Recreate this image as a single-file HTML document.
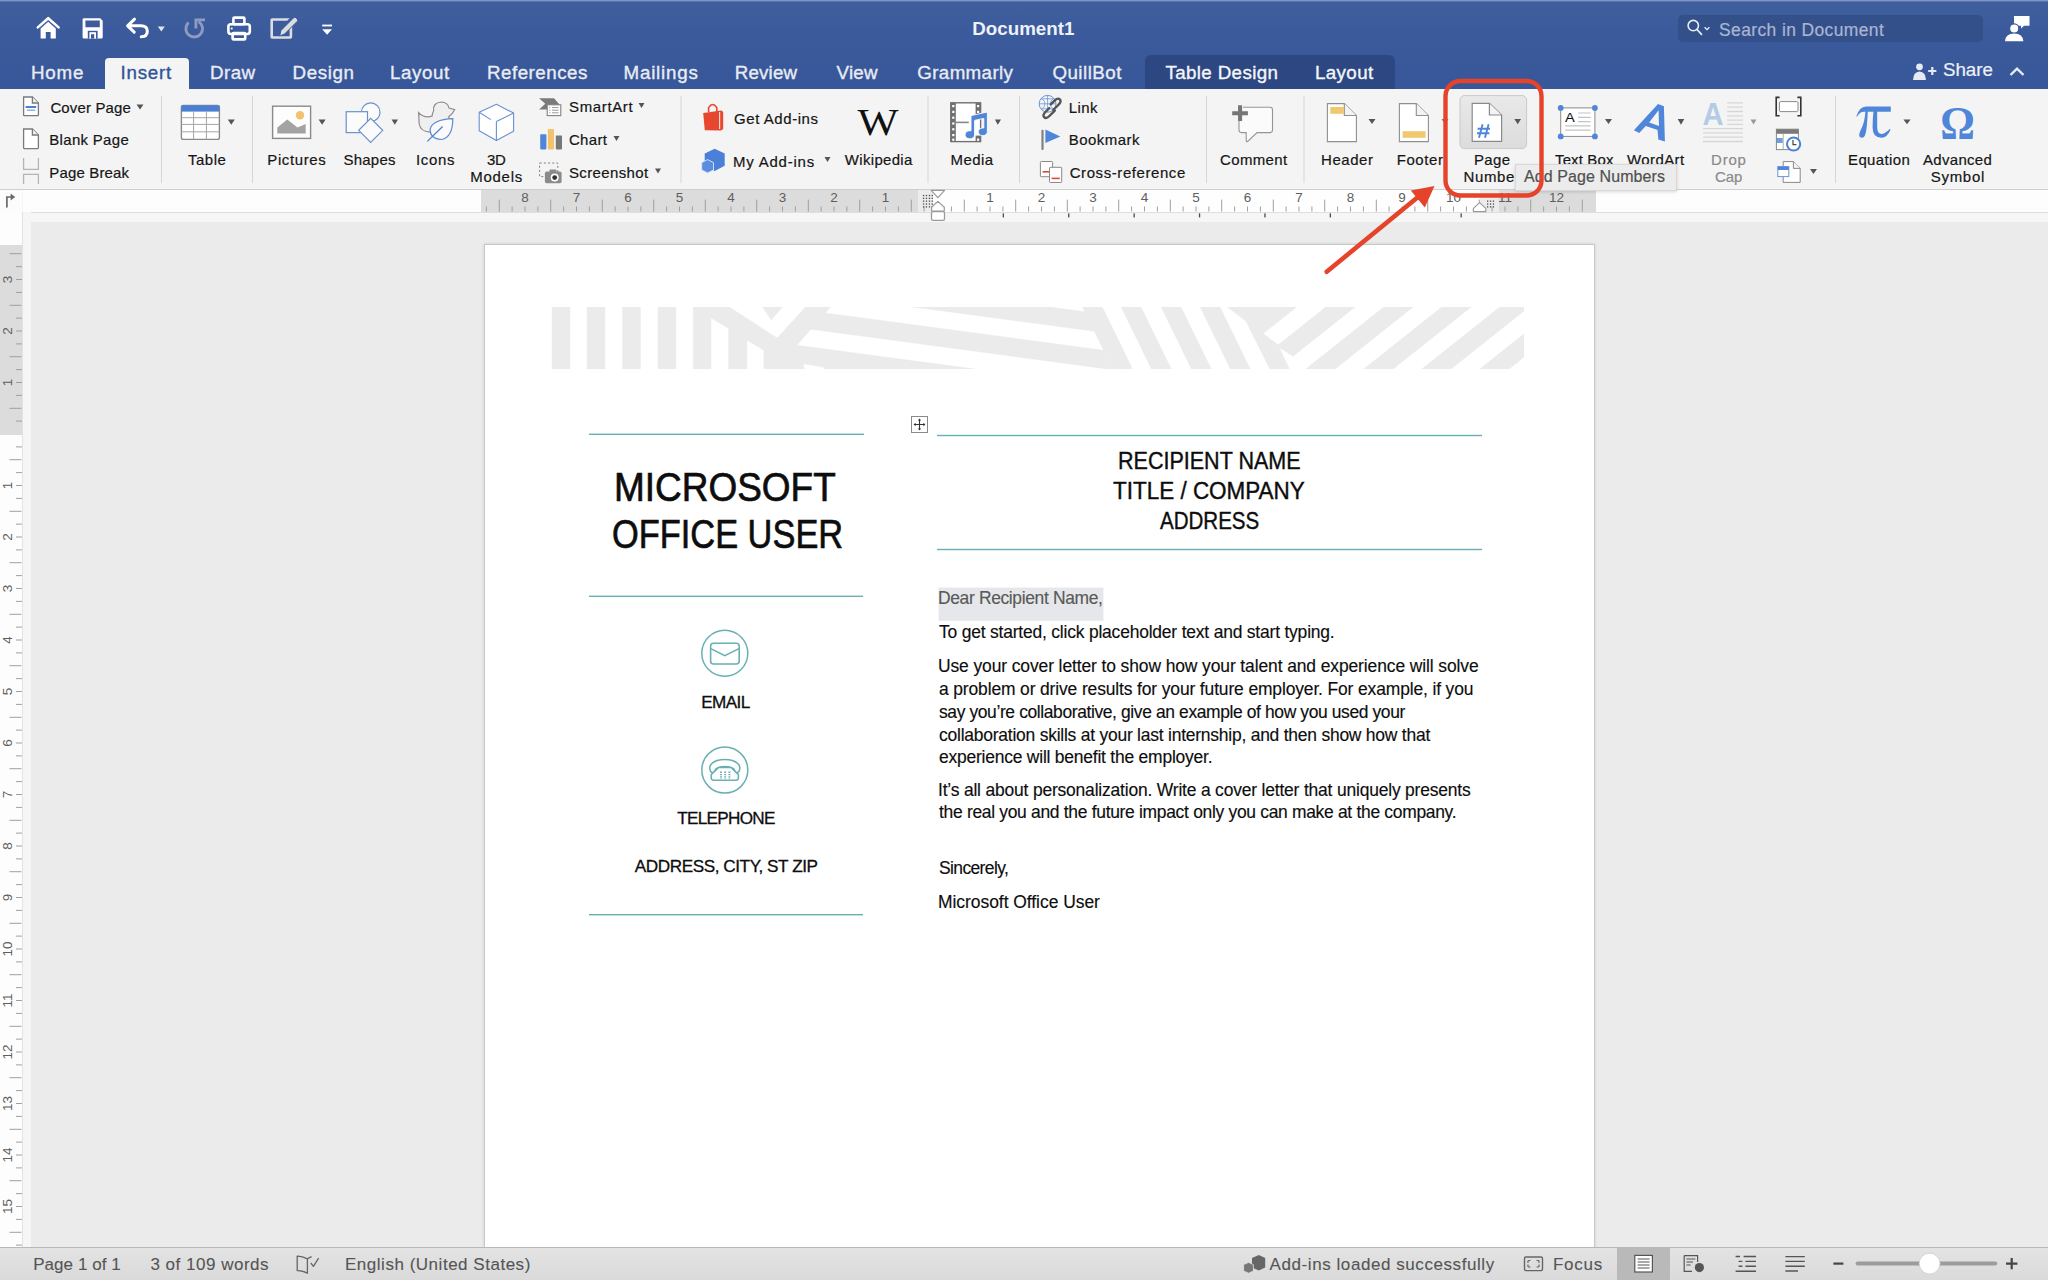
<!DOCTYPE html>
<html><head><meta charset="utf-8"><style>
html,body{margin:0;padding:0;width:2048px;height:1280px;overflow:hidden;position:relative;font-family:"Liberation Sans",sans-serif;background:#ebebeb}
.a{position:absolute}
.t{position:absolute;white-space:pre;line-height:1;font-family:"Liberation Sans",sans-serif}
</style></head><body>
<!-- title bar -->
<div class="a" style="left:0;top:0;width:2048px;height:89px;background:linear-gradient(#3f5f9f,#3a5a9b 40%,#37579a)"></div>
<div class="a" style="left:0;top:0;width:2048px;height:1px;background:#8096c2"></div><div class="a" style="left:0;top:1px;width:2048px;height:1px;background:#5673ab"></div>
<!-- search box -->
<div class="a" style="left:1678px;top:15px;width:305px;height:27px;border-radius:5px;background:#34508b"></div>
<!-- insert tab -->
<div class="a" style="left:105px;top:58px;width:84px;height:32px;border-radius:4px 4px 0 0;background:#f4f4f4"></div>
<!-- table design group -->
<div class="a" style="left:1145px;top:55px;width:250px;height:34px;border-radius:6px 6px 0 0;background:#2c4781"></div>
<!-- ribbon -->
<div class="a" style="left:0;top:89px;width:2048px;height:101px;background:#f4f4f4"></div>
<div class="a" style="left:0;top:189px;width:2048px;height:1px;background:#cfcfcf"></div>
<!-- ruler row -->
<div class="a" style="left:0;top:190px;width:2048px;height:32px;background:#f6f6f6"></div>
<div class="a" style="left:0;top:190px;width:22px;height:22px;background:#fcfcfc"></div>
<div class="a" style="left:23px;top:190px;width:2025px;height:22px;background:#fdfdfd"></div>
<div class="a" style="left:0;top:212px;width:2048px;height:1px;background:#dedede"></div>
<div class="a" style="left:481px;top:190px;width:437px;height:22px;background:#dcdcdc"></div>
<div class="a" style="left:918px;top:190px;width:15px;height:22px;background:#ececec"></div>
<div class="a" style="left:933px;top:190px;width:547px;height:22px;background:#fefefe"></div>
<div class="a" style="left:1480px;top:190px;width:19px;height:22px;background:#ececec"></div><div class="a" style="left:1499px;top:190px;width:97px;height:22px;background:#dcdcdc"></div>
<!-- vertical ruler -->
<div class="a" style="left:0;top:212px;width:22px;height:1036px;background:#fdfdfd"></div>
<div class="a" style="left:0;top:245px;width:22px;height:190px;background:#dcdcdc"></div>
<div class="a" style="left:22px;top:212px;width:1px;height:1036px;background:#e2e2e2"></div>
<div class="a" style="left:23px;top:212px;width:8px;height:1036px;background:#f6f6f6"></div>
<!-- canvas -->
<div class="a" style="left:31px;top:222px;width:2017px;height:1026px;background:#ebebeb"></div>
<!-- page -->
<div class="a" style="left:484px;top:244px;width:1111px;height:1010px;background:#ffffff;border:1px solid #c8c8c8;box-sizing:border-box;box-shadow:0 0 3px rgba(0,0,0,.12)"></div>
<!-- status bar -->
<div class="a" style="left:0;top:1247px;width:2048px;height:1px;background:#b8b8b8"></div>
<div class="a" style="left:0;top:1248px;width:2048px;height:32px;background:linear-gradient(#e3e3e3,#dadada)"></div>
<div class="a" style="left:1617px;top:1248px;width:53px;height:32px;background:#b9b9b9"></div>
<svg class="a" style="left:0;top:0" width="2048" height="1280"><rect x="923.6" y="206.5" width="1" height="5" fill="#a0a0a0"/><rect x="910.8" y="199.6" width="1" height="12" fill="#a0a0a0"/><rect x="897.9" y="206.5" width="1" height="5" fill="#a0a0a0"/><rect x="885.0" y="206.5" width="1" height="5" fill="#a0a0a0"/><rect x="872.1" y="206.5" width="1" height="5" fill="#a0a0a0"/><rect x="859.2" y="199.6" width="1" height="12" fill="#a0a0a0"/><rect x="846.4" y="206.5" width="1" height="5" fill="#a0a0a0"/><rect x="833.5" y="206.5" width="1" height="5" fill="#a0a0a0"/><rect x="820.6" y="206.5" width="1" height="5" fill="#a0a0a0"/><rect x="807.8" y="199.6" width="1" height="12" fill="#a0a0a0"/><rect x="794.9" y="206.5" width="1" height="5" fill="#a0a0a0"/><rect x="782.0" y="206.5" width="1" height="5" fill="#a0a0a0"/><rect x="769.1" y="206.5" width="1" height="5" fill="#a0a0a0"/><rect x="756.2" y="199.6" width="1" height="12" fill="#a0a0a0"/><rect x="743.4" y="206.5" width="1" height="5" fill="#a0a0a0"/><rect x="730.5" y="206.5" width="1" height="5" fill="#a0a0a0"/><rect x="717.6" y="206.5" width="1" height="5" fill="#a0a0a0"/><rect x="704.8" y="199.6" width="1" height="12" fill="#a0a0a0"/><rect x="691.9" y="206.5" width="1" height="5" fill="#a0a0a0"/><rect x="679.0" y="206.5" width="1" height="5" fill="#a0a0a0"/><rect x="666.1" y="206.5" width="1" height="5" fill="#a0a0a0"/><rect x="653.2" y="199.6" width="1" height="12" fill="#a0a0a0"/><rect x="640.4" y="206.5" width="1" height="5" fill="#a0a0a0"/><rect x="627.5" y="206.5" width="1" height="5" fill="#a0a0a0"/><rect x="614.6" y="206.5" width="1" height="5" fill="#a0a0a0"/><rect x="601.8" y="199.6" width="1" height="12" fill="#a0a0a0"/><rect x="588.9" y="206.5" width="1" height="5" fill="#a0a0a0"/><rect x="576.0" y="206.5" width="1" height="5" fill="#a0a0a0"/><rect x="563.1" y="206.5" width="1" height="5" fill="#a0a0a0"/><rect x="550.2" y="199.6" width="1" height="12" fill="#a0a0a0"/><rect x="537.4" y="206.5" width="1" height="5" fill="#a0a0a0"/><rect x="524.5" y="206.5" width="1" height="5" fill="#a0a0a0"/><rect x="511.6" y="206.5" width="1" height="5" fill="#a0a0a0"/><rect x="498.8" y="199.6" width="1" height="12" fill="#a0a0a0"/><rect x="485.9" y="206.5" width="1" height="5" fill="#a0a0a0"/><text x="885.5" y="201.8" text-anchor="middle" font-family="Liberation Sans" font-size="13.5" fill="#5e5e5e">1</text><text x="834.0" y="201.8" text-anchor="middle" font-family="Liberation Sans" font-size="13.5" fill="#5e5e5e">2</text><text x="782.5" y="201.8" text-anchor="middle" font-family="Liberation Sans" font-size="13.5" fill="#5e5e5e">3</text><text x="731.0" y="201.8" text-anchor="middle" font-family="Liberation Sans" font-size="13.5" fill="#5e5e5e">4</text><text x="679.5" y="201.8" text-anchor="middle" font-family="Liberation Sans" font-size="13.5" fill="#5e5e5e">5</text><text x="628.0" y="201.8" text-anchor="middle" font-family="Liberation Sans" font-size="13.5" fill="#5e5e5e">6</text><text x="576.5" y="201.8" text-anchor="middle" font-family="Liberation Sans" font-size="13.5" fill="#5e5e5e">7</text><text x="525.0" y="201.8" text-anchor="middle" font-family="Liberation Sans" font-size="13.5" fill="#5e5e5e">8</text><rect x="950.9" y="206.5" width="1" height="5" fill="#a0a0a0"/><rect x="963.8" y="199.6" width="1" height="12" fill="#a0a0a0"/><rect x="976.6" y="206.5" width="1" height="5" fill="#a0a0a0"/><rect x="989.5" y="206.5" width="1" height="5" fill="#a0a0a0"/><rect x="1002.4" y="206.5" width="1" height="5" fill="#a0a0a0"/><rect x="1015.2" y="199.6" width="1" height="12" fill="#a0a0a0"/><rect x="1028.1" y="206.5" width="1" height="5" fill="#a0a0a0"/><rect x="1041.0" y="206.5" width="1" height="5" fill="#a0a0a0"/><rect x="1053.9" y="206.5" width="1" height="5" fill="#a0a0a0"/><rect x="1066.8" y="199.6" width="1" height="12" fill="#a0a0a0"/><rect x="1079.6" y="206.5" width="1" height="5" fill="#a0a0a0"/><rect x="1092.5" y="206.5" width="1" height="5" fill="#a0a0a0"/><rect x="1105.4" y="206.5" width="1" height="5" fill="#a0a0a0"/><rect x="1118.2" y="199.6" width="1" height="12" fill="#a0a0a0"/><rect x="1131.1" y="206.5" width="1" height="5" fill="#a0a0a0"/><rect x="1144.0" y="206.5" width="1" height="5" fill="#a0a0a0"/><rect x="1156.9" y="206.5" width="1" height="5" fill="#a0a0a0"/><rect x="1169.8" y="199.6" width="1" height="12" fill="#a0a0a0"/><rect x="1182.6" y="206.5" width="1" height="5" fill="#a0a0a0"/><rect x="1195.5" y="206.5" width="1" height="5" fill="#a0a0a0"/><rect x="1208.4" y="206.5" width="1" height="5" fill="#a0a0a0"/><rect x="1221.2" y="199.6" width="1" height="12" fill="#a0a0a0"/><rect x="1234.1" y="206.5" width="1" height="5" fill="#a0a0a0"/><rect x="1247.0" y="206.5" width="1" height="5" fill="#a0a0a0"/><rect x="1259.9" y="206.5" width="1" height="5" fill="#a0a0a0"/><rect x="1272.8" y="199.6" width="1" height="12" fill="#a0a0a0"/><rect x="1285.6" y="206.5" width="1" height="5" fill="#a0a0a0"/><rect x="1298.5" y="206.5" width="1" height="5" fill="#a0a0a0"/><rect x="1311.4" y="206.5" width="1" height="5" fill="#a0a0a0"/><rect x="1324.2" y="199.6" width="1" height="12" fill="#a0a0a0"/><rect x="1337.1" y="206.5" width="1" height="5" fill="#a0a0a0"/><rect x="1350.0" y="206.5" width="1" height="5" fill="#a0a0a0"/><rect x="1362.9" y="206.5" width="1" height="5" fill="#a0a0a0"/><rect x="1375.8" y="199.6" width="1" height="12" fill="#a0a0a0"/><rect x="1388.6" y="206.5" width="1" height="5" fill="#a0a0a0"/><rect x="1401.5" y="206.5" width="1" height="5" fill="#a0a0a0"/><rect x="1414.4" y="206.5" width="1" height="5" fill="#a0a0a0"/><rect x="1427.2" y="199.6" width="1" height="12" fill="#a0a0a0"/><rect x="1440.1" y="206.5" width="1" height="5" fill="#a0a0a0"/><rect x="1453.0" y="206.5" width="1" height="5" fill="#a0a0a0"/><rect x="1465.9" y="206.5" width="1" height="5" fill="#a0a0a0"/><rect x="1478.8" y="199.6" width="1" height="12" fill="#a0a0a0"/><rect x="1491.6" y="206.5" width="1" height="5" fill="#a0a0a0"/><rect x="1504.5" y="206.5" width="1" height="5" fill="#a0a0a0"/><rect x="1517.4" y="206.5" width="1" height="5" fill="#a0a0a0"/><rect x="1530.2" y="199.6" width="1" height="12" fill="#a0a0a0"/><rect x="1543.1" y="206.5" width="1" height="5" fill="#a0a0a0"/><rect x="1556.0" y="206.5" width="1" height="5" fill="#a0a0a0"/><rect x="1568.9" y="206.5" width="1" height="5" fill="#a0a0a0"/><rect x="1581.8" y="199.6" width="1" height="12" fill="#a0a0a0"/><text x="990.0" y="201.8" text-anchor="middle" font-family="Liberation Sans" font-size="13.5" fill="#5e5e5e">1</text><text x="1041.5" y="201.8" text-anchor="middle" font-family="Liberation Sans" font-size="13.5" fill="#5e5e5e">2</text><text x="1093.0" y="201.8" text-anchor="middle" font-family="Liberation Sans" font-size="13.5" fill="#5e5e5e">3</text><text x="1144.5" y="201.8" text-anchor="middle" font-family="Liberation Sans" font-size="13.5" fill="#5e5e5e">4</text><text x="1196.0" y="201.8" text-anchor="middle" font-family="Liberation Sans" font-size="13.5" fill="#5e5e5e">5</text><text x="1247.5" y="201.8" text-anchor="middle" font-family="Liberation Sans" font-size="13.5" fill="#5e5e5e">6</text><text x="1299.0" y="201.8" text-anchor="middle" font-family="Liberation Sans" font-size="13.5" fill="#5e5e5e">7</text><text x="1350.5" y="201.8" text-anchor="middle" font-family="Liberation Sans" font-size="13.5" fill="#5e5e5e">8</text><text x="1402.0" y="201.8" text-anchor="middle" font-family="Liberation Sans" font-size="13.5" fill="#5e5e5e">9</text><text x="1453.5" y="201.8" text-anchor="middle" font-family="Liberation Sans" font-size="13.5" fill="#5e5e5e">10</text><text x="1505.0" y="201.8" text-anchor="middle" font-family="Liberation Sans" font-size="13.5" fill="#5e5e5e">11</text><text x="1556.5" y="201.8" text-anchor="middle" font-family="Liberation Sans" font-size="13.5" fill="#5e5e5e">12</text><rect x="9.5" y="253.2" width="12" height="1" fill="#a0a0a0"/><rect x="16" y="266.1" width="6" height="1" fill="#a0a0a0"/><rect x="16" y="279.0" width="6" height="1" fill="#a0a0a0"/><rect x="16" y="291.9" width="6" height="1" fill="#a0a0a0"/><rect x="9.5" y="304.8" width="12" height="1" fill="#a0a0a0"/><rect x="16" y="317.6" width="6" height="1" fill="#a0a0a0"/><rect x="16" y="330.5" width="6" height="1" fill="#a0a0a0"/><rect x="16" y="343.4" width="6" height="1" fill="#a0a0a0"/><rect x="9.5" y="356.2" width="12" height="1" fill="#a0a0a0"/><rect x="16" y="369.1" width="6" height="1" fill="#a0a0a0"/><rect x="16" y="382.0" width="6" height="1" fill="#a0a0a0"/><rect x="16" y="394.9" width="6" height="1" fill="#a0a0a0"/><rect x="9.5" y="407.8" width="12" height="1" fill="#a0a0a0"/><rect x="16" y="420.6" width="6" height="1" fill="#a0a0a0"/><rect x="16" y="446.4" width="6" height="1" fill="#a0a0a0"/><rect x="9.5" y="459.2" width="12" height="1" fill="#a0a0a0"/><rect x="16" y="472.1" width="6" height="1" fill="#a0a0a0"/><rect x="16" y="485.0" width="6" height="1" fill="#a0a0a0"/><rect x="16" y="497.9" width="6" height="1" fill="#a0a0a0"/><rect x="9.5" y="510.8" width="12" height="1" fill="#a0a0a0"/><rect x="16" y="523.6" width="6" height="1" fill="#a0a0a0"/><rect x="16" y="536.5" width="6" height="1" fill="#a0a0a0"/><rect x="16" y="549.4" width="6" height="1" fill="#a0a0a0"/><rect x="9.5" y="562.2" width="12" height="1" fill="#a0a0a0"/><rect x="16" y="575.1" width="6" height="1" fill="#a0a0a0"/><rect x="16" y="588.0" width="6" height="1" fill="#a0a0a0"/><rect x="16" y="600.9" width="6" height="1" fill="#a0a0a0"/><rect x="9.5" y="613.8" width="12" height="1" fill="#a0a0a0"/><rect x="16" y="626.6" width="6" height="1" fill="#a0a0a0"/><rect x="16" y="639.5" width="6" height="1" fill="#a0a0a0"/><rect x="16" y="652.4" width="6" height="1" fill="#a0a0a0"/><rect x="9.5" y="665.2" width="12" height="1" fill="#a0a0a0"/><rect x="16" y="678.1" width="6" height="1" fill="#a0a0a0"/><rect x="16" y="691.0" width="6" height="1" fill="#a0a0a0"/><rect x="16" y="703.9" width="6" height="1" fill="#a0a0a0"/><rect x="9.5" y="716.8" width="12" height="1" fill="#a0a0a0"/><rect x="16" y="729.6" width="6" height="1" fill="#a0a0a0"/><rect x="16" y="742.5" width="6" height="1" fill="#a0a0a0"/><rect x="16" y="755.4" width="6" height="1" fill="#a0a0a0"/><rect x="9.5" y="768.2" width="12" height="1" fill="#a0a0a0"/><rect x="16" y="781.1" width="6" height="1" fill="#a0a0a0"/><rect x="16" y="794.0" width="6" height="1" fill="#a0a0a0"/><rect x="16" y="806.9" width="6" height="1" fill="#a0a0a0"/><rect x="9.5" y="819.8" width="12" height="1" fill="#a0a0a0"/><rect x="16" y="832.6" width="6" height="1" fill="#a0a0a0"/><rect x="16" y="845.5" width="6" height="1" fill="#a0a0a0"/><rect x="16" y="858.4" width="6" height="1" fill="#a0a0a0"/><rect x="9.5" y="871.2" width="12" height="1" fill="#a0a0a0"/><rect x="16" y="884.1" width="6" height="1" fill="#a0a0a0"/><rect x="16" y="897.0" width="6" height="1" fill="#a0a0a0"/><rect x="16" y="909.9" width="6" height="1" fill="#a0a0a0"/><rect x="9.5" y="922.8" width="12" height="1" fill="#a0a0a0"/><rect x="16" y="935.6" width="6" height="1" fill="#a0a0a0"/><rect x="16" y="948.5" width="6" height="1" fill="#a0a0a0"/><rect x="16" y="961.4" width="6" height="1" fill="#a0a0a0"/><rect x="9.5" y="974.2" width="12" height="1" fill="#a0a0a0"/><rect x="16" y="987.1" width="6" height="1" fill="#a0a0a0"/><rect x="16" y="1000.0" width="6" height="1" fill="#a0a0a0"/><rect x="16" y="1012.9" width="6" height="1" fill="#a0a0a0"/><rect x="9.5" y="1025.8" width="12" height="1" fill="#a0a0a0"/><rect x="16" y="1038.6" width="6" height="1" fill="#a0a0a0"/><rect x="16" y="1051.5" width="6" height="1" fill="#a0a0a0"/><rect x="16" y="1064.4" width="6" height="1" fill="#a0a0a0"/><rect x="9.5" y="1077.2" width="12" height="1" fill="#a0a0a0"/><rect x="16" y="1090.1" width="6" height="1" fill="#a0a0a0"/><rect x="16" y="1103.0" width="6" height="1" fill="#a0a0a0"/><rect x="16" y="1115.9" width="6" height="1" fill="#a0a0a0"/><rect x="9.5" y="1128.8" width="12" height="1" fill="#a0a0a0"/><rect x="16" y="1141.6" width="6" height="1" fill="#a0a0a0"/><rect x="16" y="1154.5" width="6" height="1" fill="#a0a0a0"/><rect x="16" y="1167.4" width="6" height="1" fill="#a0a0a0"/><rect x="9.5" y="1180.2" width="12" height="1" fill="#a0a0a0"/><rect x="16" y="1193.1" width="6" height="1" fill="#a0a0a0"/><rect x="16" y="1206.0" width="6" height="1" fill="#a0a0a0"/><rect x="16" y="1218.9" width="6" height="1" fill="#a0a0a0"/><rect x="9.5" y="1231.8" width="12" height="1" fill="#a0a0a0"/><rect x="16" y="1244.6" width="6" height="1" fill="#a0a0a0"/><text x="0" y="0" transform="translate(12.2 279.5) rotate(-90)" text-anchor="middle" font-family="Liberation Sans" font-size="13.5" fill="#5e5e5e">3</text><text x="0" y="0" transform="translate(12.2 331.0) rotate(-90)" text-anchor="middle" font-family="Liberation Sans" font-size="13.5" fill="#5e5e5e">2</text><text x="0" y="0" transform="translate(12.2 382.5) rotate(-90)" text-anchor="middle" font-family="Liberation Sans" font-size="13.5" fill="#5e5e5e">1</text><text x="0" y="0" transform="translate(12.2 485.5) rotate(-90)" text-anchor="middle" font-family="Liberation Sans" font-size="13.5" fill="#5e5e5e">1</text><text x="0" y="0" transform="translate(12.2 537.0) rotate(-90)" text-anchor="middle" font-family="Liberation Sans" font-size="13.5" fill="#5e5e5e">2</text><text x="0" y="0" transform="translate(12.2 588.5) rotate(-90)" text-anchor="middle" font-family="Liberation Sans" font-size="13.5" fill="#5e5e5e">3</text><text x="0" y="0" transform="translate(12.2 640.0) rotate(-90)" text-anchor="middle" font-family="Liberation Sans" font-size="13.5" fill="#5e5e5e">4</text><text x="0" y="0" transform="translate(12.2 691.5) rotate(-90)" text-anchor="middle" font-family="Liberation Sans" font-size="13.5" fill="#5e5e5e">5</text><text x="0" y="0" transform="translate(12.2 743.0) rotate(-90)" text-anchor="middle" font-family="Liberation Sans" font-size="13.5" fill="#5e5e5e">6</text><text x="0" y="0" transform="translate(12.2 794.5) rotate(-90)" text-anchor="middle" font-family="Liberation Sans" font-size="13.5" fill="#5e5e5e">7</text><text x="0" y="0" transform="translate(12.2 846.0) rotate(-90)" text-anchor="middle" font-family="Liberation Sans" font-size="13.5" fill="#5e5e5e">8</text><text x="0" y="0" transform="translate(12.2 897.5) rotate(-90)" text-anchor="middle" font-family="Liberation Sans" font-size="13.5" fill="#5e5e5e">9</text><text x="0" y="0" transform="translate(12.2 949.0) rotate(-90)" text-anchor="middle" font-family="Liberation Sans" font-size="13.5" fill="#5e5e5e">10</text><text x="0" y="0" transform="translate(12.2 1000.5) rotate(-90)" text-anchor="middle" font-family="Liberation Sans" font-size="13.5" fill="#5e5e5e">11</text><text x="0" y="0" transform="translate(12.2 1052.0) rotate(-90)" text-anchor="middle" font-family="Liberation Sans" font-size="13.5" fill="#5e5e5e">12</text><text x="0" y="0" transform="translate(12.2 1103.5) rotate(-90)" text-anchor="middle" font-family="Liberation Sans" font-size="13.5" fill="#5e5e5e">13</text><text x="0" y="0" transform="translate(12.2 1155.0) rotate(-90)" text-anchor="middle" font-family="Liberation Sans" font-size="13.5" fill="#5e5e5e">14</text><text x="0" y="0" transform="translate(12.2 1206.5) rotate(-90)" text-anchor="middle" font-family="Liberation Sans" font-size="13.5" fill="#5e5e5e">15</text></svg><svg class="a" style="left:0;top:0" width="2048" height="1280" viewBox="0 0 2048 1280">
<defs>
<linearGradient id="pressed" x1="0" y1="0" x2="0" y2="1"><stop offset="0" stop-color="#e9e9e9"/><stop offset="1" stop-color="#dcdcdc"/></linearGradient>
</defs>
<!-- ===== title bar icons ===== -->
<g fill="#ffffff" stroke="none">
 <path d="M37.8 27.4 L48.2 18.2 L58.6 27.4" fill="none" stroke="#fff" stroke-width="2.6" stroke-linecap="round" stroke-linejoin="round"/>
 <path d="M40.6 28.4 L48.2 21.8 L55.8 28.4 V38.4 H50.6 V32 H45.8 V38.4 H40.6 Z"/>
 <path fill-rule="evenodd" d="M82.6 19.6 Q82.6 18.3 83.9 18.3 H100.2 L102.7 20.8 V37.3 Q102.7 38.6 101.4 38.6 H83.9 Q82.6 38.6 82.6 37.3 Z M85.4 20.6 V27.2 H99.8 V20.6 Z"/>
 <rect x="87.8" y="30.8" width="9.8" height="7.8" fill="#3b5a9a"/>
 <rect x="89.4" y="32.2" width="6.6" height="6.4" fill="#fff"/>
 <rect x="91" y="34.2" width="3.2" height="4.4" fill="#3b5a9a"/>
</g>
<path d="M134.5 19.2 L127.6 25.8 L134.2 32.2 M128.6 25.8 H141 Q147.3 25.8 147.3 31.3 Q147.3 36.8 141.2 36.8" fill="none" stroke="#fff" stroke-width="3" stroke-linecap="round" stroke-linejoin="round"/>
<path d="M157.8 26.6 H164.8 L161.3 31.6 Z" fill="#dfe5f0"/>
<path d="M198.5 21.6 A8.3 8.3 0 1 1 188.6 22.6" fill="none" stroke="#8e9bbf" stroke-width="2.8"/>
<path d="M194.5 18.5 H205 V21.3 H197.3 V28.6 H194.5 Z" fill="#8e9bbf"/>
<g fill="none" stroke="#fff" stroke-width="2.6" stroke-linejoin="round">
 <rect x="233.4" y="17.6" width="11" height="6.6" rx="1"/>
 <rect x="228.4" y="24.2" width="21.4" height="9.8" rx="2.4"/>
 <rect x="232.6" y="33" width="12.6" height="6.4" rx="1"/>
</g>
<rect x="230.8" y="27.6" width="1.8" height="1.8" fill="#fff"/>
<g fill="#dcdde0">
 <path fill-rule="evenodd" d="M270.4 20 Q270.4 18.2 272.2 18.2 H289.6 L287.2 20.8 H273 V36.2 H289.6 V29 L292.2 26.4 V37 Q292.2 38.8 290.4 38.8 H272.2 Q270.4 38.8 270.4 37 Z"/>
 <path d="M279.6 36 L281 30.4 L293.6 17.8 Q294.8 16.6 296 17.8 L297.2 19 Q298.4 20.2 297.2 21.4 L284.6 34 Z" stroke="#3b5a9a" stroke-width="1"/>
</g>
<rect x="322.2" y="24.6" width="9.8" height="1.8" fill="#fff"/>
<path d="M322.2 29.2 H332 L327.1 34.7 Z" fill="#fff"/>
<!-- search icon -->
<circle cx="1693.3" cy="25.6" r="5.2" fill="none" stroke="#e8ecf5" stroke-width="1.6"/>
<path d="M1697 29.5 L1701.5 34.4" stroke="#e8ecf5" stroke-width="1.8" stroke-linecap="round"/>
<path d="M1704.6 27.2 L1707 29.6 L1709.4 27.2" fill="none" stroke="#e8ecf5" stroke-width="1.3"/>
<!-- person feedback icon -->
<path d="M2014 16 H2029.5 V25.8 H2024 L2021 28.6 V25.8 H2014 Z" fill="#fff"/>
<circle cx="2014.2" cy="28.5" r="4.6" fill="#fff" stroke="#3b5a9a" stroke-width="1.2"/>
<path d="M2005 41.2 Q2005.5 33.8 2014.2 33.6 Q2022.8 33.8 2023.4 41.2 Z" fill="#fff"/>
<!-- share icon -->
<circle cx="1919.5" cy="66.8" r="3.4" fill="#e6eaf3"/>
<path d="M1913 80 Q1913.4 72 1919.5 71.6 Q1925.6 72 1926 80 Z" fill="#e6eaf3"/>
<path d="M1928.2 71 H1936.4 M1932.3 66.9 V75.1" stroke="#e6eaf3" stroke-width="2.2"/>
<path d="M2010.5 75 L2017 68.6 L2023.5 75" fill="none" stroke="#e6eaf3" stroke-width="2.4"/>

<!-- ===== ribbon separators ===== -->
<g fill="#d5d5d5">
 <rect x="161" y="96" width="1" height="87"/>
 <rect x="252" y="96" width="1" height="87"/>
 <rect x="680.5" y="96" width="1" height="87"/>
 <rect x="927.5" y="96" width="1" height="87"/>
 <rect x="1019" y="96" width="1" height="87"/>
 <rect x="1206" y="96" width="1" height="87"/>
 <rect x="1303.5" y="96" width="1" height="87"/>
 <rect x="1835" y="96" width="1" height="87"/>
</g>
<!-- dropdown triangles -->
<g fill="#555">
 <path d="M136.5 104.5 H143.5 L140 109.5 Z"/>
 <path d="M227.8 119.4 H234.8 L231.3 124.7 Z"/>
 <path d="M318.6 119.4 H325.6 L322.1 124.7 Z"/>
 <path d="M391.6 119.4 H398 L394.8 124.7 Z"/>
 <path d="M638.5 103 H644.5 L641.5 108 Z"/>
 <path d="M613.5 136 H619.5 L616.5 141 Z"/>
 <path d="M655 168.5 H661 L658 173.5 Z"/>
 <path d="M824.5 157 H830.5 L827.5 162 Z"/>
 <path d="M994.9 119.6 H1001 L997.8 124.7 Z"/>
 <path d="M1368.5 119 H1375.5 L1372 124 Z"/>
 <path d="M1441.5 119 H1448.5 L1445 124 Z" fill="#777"/>
 <path d="M1605 119 H1612 L1608.5 124 Z"/>
 <path d="M1677.7 119.1 H1684.3 L1681 124.7 Z"/>
 <path d="M1750.6 119.4 H1756.5 L1753.5 124.4 Z" fill="#999"/>
 <path d="M1810 169 H1817 L1813.4 174.1 Z"/>
 <path d="M1903.4 119.5 H1910.6 L1907 124.3 Z"/>
</g>
<!-- cover page / blank / break -->
<g fill="#fff" stroke="#7a7a7a" stroke-width="1.3">
 <path d="M23.6 97 H32.4 L38.4 103 V115 Q38.4 115.6 37.8 115.6 H24.2 Q23.6 115.6 23.6 115 Z"/>
 <path d="M32.4 97 V103 H38.4" fill="#f0f0f0"/>
 <path d="M23.6 129 H32.4 L38.4 135 V147.8 Q38.4 148.6 37.8 148.6 H24.2 Q23.6 148.6 23.6 147.8 Z"/>
 <path d="M32.4 129 V135 H38.4" fill="#f0f0f0"/>
 <path d="M23.6 158 V169.4 H38.4 V158" fill="none" stroke="#b4b4b4"/>
 <path d="M23.6 184 V174.4 H38.4 V184" fill="none" stroke="#b4b4b4"/>
</g>
<rect x="25.6" y="106" width="10.6" height="2" fill="#4a7fd4"/>
<rect x="27" y="109.6" width="8.3" height="1.1" fill="#6a95d8"/>
<!-- table icon -->
<rect x="181.4" y="105.4" width="38" height="34" rx="2" fill="#fff" stroke="#8a8a8a" stroke-width="1.4"/>
<rect x="181.4" y="105.4" width="38" height="6.2" fill="#4a7fd4"/>
<g stroke="#a5a5a5" stroke-width="1"><path d="M193.6 111.6 V139.4 M206.4 111.6 V139.4 M181.4 117.7 H219.4 M181.4 124.4 H219.4 M181.4 131.8 H219.4"/></g>
<!-- pictures -->
<rect x="272.6" y="106.2" width="38" height="32.2" fill="#fdfdfd" stroke="#8a8a8a" stroke-width="1.4"/>
<circle cx="300" cy="115.2" r="4.2" fill="#f0c36c"/>
<path d="M277.3 127.6 L287.3 119.4 L297.5 127.6 L305.7 124 V133.6 H277.3 Z" fill="#a3a3a3"/>
<!-- shapes -->
<g fill="#fbfbfb" stroke="#6a90cf" stroke-width="1.2">
 <circle cx="370.7" cy="112.2" r="9.3"/>
 <rect x="346.2" y="111.7" width="21.3" height="20.9"/>
 <path d="M370.7 118.3 L382.7 130.3 L370.7 142.3 L358.7 130.3 Z"/>
</g>
<!-- icons (duck+leaf) -->
<path d="M418.6 112.6 Q424 118.5 432 116.2 Q432.5 112.5 433.6 111 Q432.4 103 441.2 102 Q447.8 102.3 449 108 L454.8 109.6 Q452.5 114.5 448.6 116.8 Q450.5 120 448 124 L432 132 Q420.8 132.6 419.2 124 Z" fill="#efefef" stroke="#8d8d8d" stroke-width="1.2"/>
<path d="M452.8 118.7 Q452.8 137 441.7 139.5 Q429.8 138.8 430.2 129 Q432.5 119.6 452.8 118.7 Z" fill="#fafafa" stroke="#5d8bd4" stroke-width="1.2"/>
<path d="M427.3 141.4 L442.6 126.5" stroke="#4a7fd4" stroke-width="1.3"/>
<!-- 3D models -->
<g fill="#fff" stroke="#6a90cf" stroke-width="1.1" stroke-linejoin="round">
 <path d="M496.4 104.3 L513.6 113.1 V131.2 L496.4 140.5 L479.2 130.7 V112.2 Z"/>
 <path d="M496.4 121.4 L513.6 113.1 M496.4 121.4 V140.5 M479.2 112.2 L490.8 119.6" fill="none"/>
</g>
<!-- SmartArt -->
<path d="M539.1 98.2 H554 L559.5 104.5 L554 109.4 H539.1 L545.3 103.8 Z" fill="#7a7a7a"/>
<rect x="547.2" y="104.8" width="13.6" height="10.8" fill="#fff" stroke="#808080" stroke-width="1.1"/>
<g stroke="#9a9a9a" stroke-width="1"><path d="M552 107.6 H558.6 M552 110.2 H558.6 M552 112.8 H558.6 M549.2 107.6 H550.4 M549.2 110.2 H550.4 M549.2 112.8 H550.4"/></g>
<!-- Chart -->
<rect x="540.2" y="134.2" width="6.2" height="15.2" rx="0.8" fill="#4f86d9"/>
<rect x="547.8" y="129" width="6.2" height="20.4" rx="0.8" fill="#f0c36c"/>
<rect x="555.8" y="135.6" width="6.2" height="13.8" rx="0.8" fill="#777"/>
<!-- Screenshot -->
<rect x="539.6" y="163" width="18.2" height="13.6" fill="none" stroke="#888" stroke-width="1" stroke-dasharray="2.2 2"/>
<rect x="544.9" y="171.4" width="16.7" height="11.8" rx="1.8" fill="#8a8a8a"/>
<rect x="549.5" y="169.6" width="7" height="3" rx="1" fill="#8a8a8a"/>
<circle cx="554.7" cy="177.6" r="4" fill="#fff"/>
<circle cx="554.7" cy="177.6" r="2.4" fill="#333"/>
<!-- Get Add-ins -->
<path d="M708.6 112 V107.6 Q712.6 101.5 716.8 107.6 V112" fill="none" stroke="#e6472e" stroke-width="1.6"/>
<path d="M703.2 113 L721.4 110.4 L723.2 112 V129 L721 130.6 L704.8 130.2 Z" fill="#e6472e"/>
<rect x="719" y="112" width="1.2" height="17" fill="#fff" opacity=".8"/>
<!-- My Add-ins -->
<path d="M714.7 148.8 L724.7 153.6 V165.8 L714.7 170.9 L704.7 165.8 V153.6 Z" fill="#4a80d8"/>
<path d="M707.6 159.6 L713.5 162.6 V170 L707.6 172.9 L701.7 170 V162.6 Z" fill="#5a8de0" stroke="#dfe8f5" stroke-width="0.9"/>
<!-- Wikipedia W -->
<text x="857.6" y="134.6" font-family="Liberation Serif" font-size="37" fill="#111" textLength="41" lengthAdjust="spacingAndGlyphs">W</text>
<!-- Media -->
<rect x="950.8" y="102.8" width="29.8" height="38.8" fill="#fff" stroke="#707070" stroke-width="1.4"/>
<rect x="950.8" y="102.8" width="5" height="38.8" fill="#707070"/>
<rect x="975.6" y="102.8" width="5" height="14" fill="#707070"/><rect x="975.6" y="135.6" width="5" height="6" fill="#707070"/>
<g fill="#fff"><rect x="952.2" y="105" width="2.2" height="2.2"/><rect x="952.2" y="110.8" width="2.2" height="2.2"/><rect x="952.2" y="116.6" width="2.2" height="2.2"/><rect x="952.2" y="122.4" width="2.2" height="2.2"/><rect x="952.2" y="128.2" width="2.2" height="2.2"/><rect x="952.2" y="134" width="2.2" height="2.2"/><rect x="952.2" y="138.6" width="2.2" height="2.2"/>
<rect x="977" y="105" width="2.2" height="2.2"/><rect x="977" y="110.8" width="2.2" height="2.2"/><rect x="977" y="138.6" width="2.2" height="2.2"/></g>
<rect x="955.8" y="121.6" width="13" height="1.6" fill="#888"/>
<path d="M971 115.6 L987.4 112 V131.6 A4.6 3.9 0 1 1 983.8 128 V118.4 L974.6 120.4 V134.6 A4.8 4.1 0 1 1 971 130.8 Z" fill="#4f86d9" stroke="#fff" stroke-width="0.9"/>
<!-- Link -->
<circle cx="1047.6" cy="103.8" r="8.4" fill="none" stroke="#5b8ad6" stroke-width="0.9"/>
<path d="M1039.2 103.8 H1056 M1047.6 95.4 V112.2 M1041 98.8 H1054.2 M1041 108.8 H1054.2" stroke="#5b8ad6" stroke-width="0.7"/>
<path d="M1042.4 99 Q1047.6 103.8 1042.4 108.6 M1052.8 99 Q1047.6 103.8 1052.8 108.6" fill="none" stroke="#5b8ad6" stroke-width="0.7"/>
<g fill="none" stroke="#555" stroke-width="2.4" stroke-linecap="round">
 <path d="M1053.2 110 L1058.6 104.6 Q1061.8 101.4 1059.8 99.4 Q1057.8 97.4 1054.6 100.6 L1050.8 104.4"/>
 <path d="M1054.8 110.6 L1049.4 116 Q1046.2 119.2 1044.2 117.2 Q1042.2 115.2 1045.4 112 L1049.2 108.2"/>
</g>
<!-- Bookmark -->
<rect x="1041.4" y="129.8" width="2.2" height="20.3" rx="1" fill="#808080"/>
<path d="M1045.4 129.4 L1060.3 136.6 L1045.4 142.9 Z" fill="#4f86d9"/>
<!-- Cross reference -->
<rect x="1040.4" y="161.5" width="12.2" height="15.2" rx="0.8" fill="#fff" stroke="#888" stroke-width="1"/>
<rect x="1049.5" y="167.3" width="12.2" height="15.2" rx="0.8" fill="#fff" stroke="#888" stroke-width="1"/>
<rect x="1042.6" y="171" width="6.4" height="1.6" fill="#e6472e"/>
<rect x="1051.6" y="177.6" width="8.2" height="1.6" fill="#e6472e"/>
<!-- Comment -->
<path d="M1239 109.8 Q1239 107.3 1241.5 107.3 H1270 Q1272.5 107.3 1272.5 109.8 V130.1 Q1272.5 132.6 1270 132.6 H1257.1 L1247.6 141.5 Q1246.2 142 1246.2 140.6 V132.6 H1241.5 Q1239 132.6 1239 130.1 Z" fill="#fbfbfb" stroke="#959595" stroke-width="1.1"/>
<path d="M1232.2 113.15 H1247.9 M1240.05 105.3 V121" stroke="#f4f4f4" stroke-width="6"/>
<path d="M1232.2 113.15 H1247.9 M1240.05 105.3 V121" stroke="#767676" stroke-width="4"/>
<!-- Header / Footer / Page number -->
<g fill="#fff" stroke="#8f8f8f" stroke-width="1.1">
 <path d="M1327.4 103.6 H1344.3 L1356.4 115.5 V141.6 H1327.4 Z"/>
 <path d="M1344.3 103.6 V115.5 H1356.4" fill="#f3f3f3"/>
 <path d="M1399.4 103.6 H1416.3 L1428.4 115.5 V141.6 H1399.4 Z"/>
 <path d="M1416.3 103.6 V115.5 H1428.4" fill="#f3f3f3"/>
</g>
<rect x="1330.3" y="107" width="13.6" height="6.8" fill="#f0c86e"/>
<rect x="1402.6" y="131.2" width="23" height="6.6" fill="#f0c86e"/>
<!-- pressed page number button -->
<rect x="1460" y="95.6" width="66.6" height="53" rx="4.5" fill="url(#pressed)" stroke="#c9c9c9" stroke-width="1"/>
<g fill="#fff" stroke="#8a8a8a" stroke-width="1.2">
 <path d="M1472.2 103.4 H1489.4 L1501.6 115 V141.4 H1472.2 Z"/>
 <path d="M1489.4 103.4 V115 H1501.6" fill="#f3f3f3"/>
</g>
<path d="M1482.6 124.2 L1479 137.8 M1488.6 124.2 L1485 137.8 M1477.6 128.8 H1490 M1477 133.2 H1489.4" stroke="#4f86d9" stroke-width="1.9"/>
<path d="M1514.4 119 H1521 L1517.7 124.2 Z" fill="#555"/>
<!-- Text box -->
<rect x="1560.7" y="107.9" width="34.2" height="28.5" fill="#fff" stroke="#8a8a8a" stroke-width="1"/>
<g fill="#4f86d9"><circle cx="1560.7" cy="107.9" r="2.9"/><circle cx="1594.9" cy="107.9" r="2.9"/><circle cx="1560.7" cy="136.4" r="2.9"/><circle cx="1594.9" cy="136.4" r="2.9"/></g>
<text x="1565" y="122" font-family="Liberation Sans" font-size="13.6" fill="#111" textLength="9.8" lengthAdjust="spacingAndGlyphs">A</text>
<g stroke="#c4c4c4" stroke-width="1.2"><path d="M1578 113 H1590.6 M1578 117.3 H1590.6 M1578 121.6 H1590.6 M1565.2 125.9 H1590.6 M1565.2 130.2 H1590.6"/></g>
<!-- WordArt A -->
<path fill-rule="evenodd" d="M1633.9 130.3 L1658 103.9 L1663.9 106.2 L1664.9 141.5 L1658.3 139.5 L1657.6 130 L1645.8 126 L1639.2 133 Z M1658.6 110.2 L1659 126 L1649.1 122.4 Z" fill="#4f86d9"/>
<!-- Drop cap -->
<text x="1702.6" y="124.7" font-family="Liberation Sans" font-weight="700" font-size="30.5" fill="#b3cbe5" textLength="21" lengthAdjust="spacingAndGlyphs">A</text>
<g stroke="#d6d6d6" stroke-width="1.3"><path d="M1727.2 102.9 H1743 M1727.2 107.2 H1743 M1727.2 111.5 H1743 M1727.2 115.8 H1743 M1727.2 120.1 H1743 M1727.2 124.4 H1743 M1703.1 128.7 H1743 M1703.1 132.9 H1743 M1703.1 137.2 H1743 M1703.1 141.5 H1743"/></g>
<!-- small column icons -->
<path d="M1779.6 97.4 H1776.2 V115.8 H1779.6 M1797.4 97.4 H1800.8 V115.8 H1797.4" fill="none" stroke="#333" stroke-width="1.6"/>
<rect x="1779.4" y="101.6" width="18.6" height="10" rx="1.4" fill="#fff" stroke="#8a8a8a" stroke-width="1"/>
<rect x="1776.4" y="129.2" width="22" height="20.4" fill="#fff" stroke="#888" stroke-width="1"/>
<rect x="1776.4" y="129.2" width="22" height="4.6" fill="#7a7a7a"/>
<path d="M1783.2 133.8 V149.6" stroke="#999" stroke-width="0.8"/>
<rect x="1776.6" y="138" width="6" height="5" fill="#4f86d9" opacity=".8"/>
<circle cx="1793.6" cy="144" r="6.6" fill="#fff" stroke="#4a80d8" stroke-width="2"/>
<path d="M1793 140 V144.6 H1796.4" fill="none" stroke="#444" stroke-width="1.2"/>
<path d="M1783.2 161.6 H1793.4 L1800.2 168.4 V182.4 H1783.2 Z" fill="#fff" stroke="#888" stroke-width="1"/>
<path d="M1793.4 161.6 V168.4 H1800.2" fill="#f3f3f3" stroke="#888" stroke-width="1"/>
<rect x="1777.8" y="166.6" width="11" height="10" fill="#fff" stroke="#6a95d8" stroke-width="1"/>
<rect x="1777.8" y="166.6" width="11" height="3.4" fill="#4f86d9"/>
<!-- Equation pi -->
<path d="M1856.3 116.5 Q1859.5 106.8 1866 106.6 H1890.8 V111.7 H1877.2 V127 Q1877.2 134 1881.5 134 Q1884.5 134 1889.8 129 L1890.6 129.6 Q1887.4 137.8 1881.4 137.8 Q1872.6 137.8 1872.6 127.6 Q1872.6 119 1873.4 111.7 H1867.8 Q1867.2 124 1866.4 129.4 Q1865.2 137.8 1862.2 137.8 Q1859 137.8 1859.2 134.6 Q1859.6 131.5 1862 127.2 Q1864.6 121.6 1865.4 111.7 H1863.8 Q1859.6 111.7 1857.2 116.6 Z" fill="#4f86d9"/>
<!-- Omega -->
<text x="1940.2" y="139" font-family="Liberation Serif" font-weight="700" font-size="46" fill="#4f86d9" textLength="34.6" lengthAdjust="spacingAndGlyphs">&#937;</text>
<!-- ===== ruler ===== -->
<g id="hr" stroke="#9a9a9a" stroke-width="1"></g>
</svg>
<svg class="a" style="left:0;top:0" width="2048" height="1280" viewBox="0 0 2048 1280">
<!-- watermark pattern -->
<clipPath id="wm"><rect x="551" y="307" width="973" height="62"/></clipPath><g fill="#ebebeb" stroke="#ebebeb" stroke-width="0.4" clip-path="url(#wm)"><rect x="552" y="307" width="18" height="62"/><rect x="587" y="307" width="18" height="62"/><rect x="622.5" y="307" width="18" height="62"/><rect x="658" y="307" width="18" height="62"/><path d="M693.2 307.0 L729.3 307.0 L777.2 338.1 L805.5 307.0 L830.4 307.0 L825.2 312.9 L1103.4 350.2 L1112.9 369.8 L810.9 329.3 L797.0 345.2 L974.9 369.0 L824.0 369.0 L823.0 367.1 L803.0 363.7 L804.4 369.0 L763.8 369.0 L763.8 350.3 L746.9 340.0 L746.9 369.0 L728.5 369.0 L728.5 328.3 L711.0 318.1 L711.0 369.0 L693.2 369.0 Z"/><path d="M762.5 307.0 L782.5 307.0 L771.3 320.0 Z"/><path d="M913.0 307.0 L1049.6 307.0 L1084.8 311.7 L1094.3 331.3 Z"/><path d="M1082.5 307.0 L1102.3 307.0 L1132.5 369.0 L1112.7 369.0 Z"/><path d="M1121.2 307.0 L1141.0 307.0 L1171.2 369.0 L1151.4 369.0 Z"/><path d="M1161.2 307.0 L1181.0 307.0 L1211.2 369.0 L1191.4 369.0 Z"/><path d="M1200.2 307.0 L1220.0 307.0 L1250.2 369.0 L1230.4 369.0 Z"/><path d="M1227.2 307.0 L1296.7 307.0 L1263.1 333.6 L1278.1 344.9 L1325.8 307.0 L1355.1 307.0 L1293.1 356.2 L1279.5 347.7 L1289.3 369.0 L1269.8 369.0 L1245.9 321.1 Z"/><path d="M1383.8 307.0 L1413.1 307.0 L1335.1 369.0 L1305.8 369.0 Z"/><path d="M1441.8 307.0 L1471.1 307.0 L1393.1 369.0 L1363.8 369.0 Z"/><path d="M1499.8 307.0 L1529.1 307.0 L1451.1 369.0 L1421.8 369.0 Z"/><path d="M1557.8 307.0 L1587.1 307.0 L1509.1 369.0 L1479.8 369.0 Z"/></g>
<!-- table move handle -->
<rect x="911.5" y="416.5" width="16" height="16" fill="#fff" stroke="#8a8a8a" stroke-width="1"/>
<path d="M919.5 419.5 V429.5 M914.5 424.5 H924.5" stroke="#333" stroke-width="1.1"/>
<path d="M919.5 418.6 L917.8 420.6 H921.2 Z M919.5 430.4 L917.8 428.4 H921.2 Z M913.6 424.5 L915.6 422.8 V426.2 Z M925.4 424.5 L923.4 422.8 V426.2 Z" fill="#333"/>
<!-- teal lines -->
<g fill="#68b0b3">
 <rect x="589" y="433.6" width="275" height="1.4"/>
 <rect x="589" y="595.6" width="274" height="1.4"/>
 <rect x="589" y="914" width="274" height="1.4"/>
 <rect x="937" y="434.8" width="545" height="1.4"/>
 <rect x="937" y="548.8" width="545" height="1.4"/>
</g>
<!-- highlight -->
<rect x="938.6" y="587.6" width="164.8" height="33.2" fill="#e6e7ea"/>
<!-- email icon -->
<circle cx="724.8" cy="653.3" r="23" fill="none" stroke="#68b0b3" stroke-width="1.5"/>
<rect x="710.6" y="643.2" width="28.6" height="20.8" rx="3" fill="none" stroke="#68b0b3" stroke-width="1.6"/>
<path d="M710.8 648.6 L724.8 655.6 L739 648.6" fill="none" stroke="#68b0b3" stroke-width="1.6"/>
<!-- phone icon -->
<circle cx="724.8" cy="770.1" r="23" fill="none" stroke="#68b0b3" stroke-width="1.5"/>
<path d="M710.6 771.6 Q708.4 766 712 763.4 Q716 759.4 724.8 759.4 Q733.6 759.4 737.6 763.4 Q741.2 766 739 771.6 Q737.6 773.2 735.4 772.4 L733.6 768.6 Q729.4 766.4 724.8 766.4 Q720.2 766.4 716 768.6 L714.2 772.4 Q712 773.2 710.6 771.6 Z" fill="none" stroke="#68b0b3" stroke-width="1.5" stroke-linejoin="round"/>
<path d="M718.6 767.4 H731 L738.4 774.6 V777.8 Q738.4 780.2 736 780.2 H713.6 Q711.2 780.2 711.2 777.8 V774.6 Z" fill="#fff" stroke="#68b0b3" stroke-width="1.5" stroke-linejoin="round"/>
<g stroke="#68b0b3" stroke-width="1.9" stroke-dasharray="1.4 0.9"><path d="M721 771.6 V779 M725.2 771.6 V779 M729.4 771.6 V779"/></g>
</svg>
<div class="a" style="z-index:5;left:1514.5px;top:163.5px;width:162px;height:27px;background:#ececec;border:1px solid #d8d8d8;box-sizing:border-box;box-shadow:0 1px 3px rgba(0,0,0,.15)"></div>
<span class="t" style="left:972.2px;top:19.7px;font-size:18.75px;letter-spacing:0.02px;color:#eef1f7;font-weight:700">Document1</span>
<span class="t" style="left:1719.0px;top:21.6px;font-size:17.44px;letter-spacing:0.40px;color:#a9b6d3;font-weight:400;-webkit-text-stroke:0.2px currentColor">Search in Document</span>
<span class="t" style="left:31.0px;top:63.7px;font-size:18.75px;letter-spacing:0.80px;color:#e9ecf3;font-weight:400;-webkit-text-stroke:0.35px currentColor">Home</span>
<span class="t" style="left:120.5px;top:63.7px;font-size:18.75px;letter-spacing:0.76px;color:#2f5597;font-weight:400;-webkit-text-stroke:0.35px currentColor">Insert</span>
<span class="t" style="left:210.0px;top:63.7px;font-size:18.75px;letter-spacing:0.43px;color:#e9ecf3;font-weight:400;-webkit-text-stroke:0.35px currentColor">Draw</span>
<span class="t" style="left:292.6px;top:63.7px;font-size:18.75px;letter-spacing:0.59px;color:#e9ecf3;font-weight:400;-webkit-text-stroke:0.35px currentColor">Design</span>
<span class="t" style="left:390.0px;top:63.7px;font-size:18.75px;letter-spacing:0.58px;color:#e9ecf3;font-weight:400;-webkit-text-stroke:0.35px currentColor">Layout</span>
<span class="t" style="left:487.0px;top:63.7px;font-size:18.75px;letter-spacing:0.50px;color:#e9ecf3;font-weight:400;-webkit-text-stroke:0.35px currentColor">References</span>
<span class="t" style="left:623.6px;top:63.7px;font-size:18.75px;letter-spacing:0.77px;color:#e9ecf3;font-weight:400;-webkit-text-stroke:0.35px currentColor">Mailings</span>
<span class="t" style="left:734.7px;top:63.7px;font-size:18.75px;letter-spacing:0.17px;color:#e9ecf3;font-weight:400;-webkit-text-stroke:0.35px currentColor">Review</span>
<span class="t" style="left:836.5px;top:63.7px;font-size:18.75px;letter-spacing:0.25px;color:#e9ecf3;font-weight:400;-webkit-text-stroke:0.35px currentColor">View</span>
<span class="t" style="left:917.3px;top:63.7px;font-size:18.75px;letter-spacing:0.36px;color:#e9ecf3;font-weight:400;-webkit-text-stroke:0.35px currentColor">Grammarly</span>
<span class="t" style="left:1052.4px;top:63.7px;font-size:18.75px;letter-spacing:0.48px;color:#e9ecf3;font-weight:400;-webkit-text-stroke:0.35px currentColor">QuillBot</span>
<span class="t" style="left:1165.4px;top:63.7px;font-size:18.75px;letter-spacing:0.38px;color:#f4f6fa;font-weight:400;-webkit-text-stroke:0.35px currentColor">Table Design</span>
<span class="t" style="left:1315.0px;top:63.7px;font-size:18.75px;letter-spacing:0.38px;color:#f4f6fa;font-weight:400;-webkit-text-stroke:0.35px currentColor">Layout</span>
<span class="t" style="left:1943.0px;top:60.7px;font-size:18.75px;letter-spacing:-0.03px;color:#eef1f7;font-weight:400;-webkit-text-stroke:0.2px currentColor">Share</span>
<span class="t" style="left:50.4px;top:100.6px;font-size:14.97px;letter-spacing:0.15px;color:#161616;font-weight:400;-webkit-text-stroke:0.2px currentColor">Cover Page</span>
<span class="t" style="left:49.3px;top:132.6px;font-size:14.97px;letter-spacing:0.32px;color:#161616;font-weight:400;-webkit-text-stroke:0.2px currentColor">Blank Page</span>
<span class="t" style="left:49.3px;top:165.6px;font-size:14.97px;letter-spacing:0.17px;color:#161616;font-weight:400;-webkit-text-stroke:0.2px currentColor">Page Break</span>
<span class="t" style="left:188.0px;top:152.7px;font-size:14.97px;letter-spacing:0.51px;color:#161616;font-weight:400;-webkit-text-stroke:0.2px currentColor">Table</span>
<span class="t" style="left:267.3px;top:152.7px;font-size:14.97px;letter-spacing:0.62px;color:#161616;font-weight:400;-webkit-text-stroke:0.2px currentColor">Pictures</span>
<span class="t" style="left:343.4px;top:152.7px;font-size:14.97px;letter-spacing:0.26px;color:#161616;font-weight:400;-webkit-text-stroke:0.2px currentColor">Shapes</span>
<span class="t" style="left:416.0px;top:152.7px;font-size:14.97px;letter-spacing:0.68px;color:#161616;font-weight:400;-webkit-text-stroke:0.2px currentColor">Icons</span>
<span class="t" style="left:487.0px;top:152.7px;font-size:14.97px;letter-spacing:-0.32px;color:#161616;font-weight:400;-webkit-text-stroke:0.2px currentColor">3D</span>
<span class="t" style="left:470.3px;top:169.6px;font-size:14.97px;letter-spacing:0.73px;color:#161616;font-weight:400;-webkit-text-stroke:0.2px currentColor">Models</span>
<span class="t" style="left:569.0px;top:99.6px;font-size:14.97px;letter-spacing:0.66px;color:#161616;font-weight:400;-webkit-text-stroke:0.2px currentColor">SmartArt</span>
<span class="t" style="left:569.0px;top:132.7px;font-size:14.97px;letter-spacing:0.31px;color:#161616;font-weight:400;-webkit-text-stroke:0.2px currentColor">Chart</span>
<span class="t" style="left:569.0px;top:165.7px;font-size:14.97px;letter-spacing:0.38px;color:#161616;font-weight:400;-webkit-text-stroke:0.2px currentColor">Screenshot</span>
<span class="t" style="left:734.0px;top:111.6px;font-size:14.97px;letter-spacing:0.58px;color:#161616;font-weight:400;-webkit-text-stroke:0.2px currentColor">Get Add-ins</span>
<span class="t" style="left:733.0px;top:154.6px;font-size:14.97px;letter-spacing:0.79px;color:#161616;font-weight:400;-webkit-text-stroke:0.2px currentColor">My Add-ins</span>
<span class="t" style="left:844.8px;top:152.7px;font-size:14.97px;letter-spacing:0.33px;color:#161616;font-weight:400;-webkit-text-stroke:0.2px currentColor">Wikipedia</span>
<span class="t" style="left:950.5px;top:152.7px;font-size:14.97px;letter-spacing:0.44px;color:#161616;font-weight:400;-webkit-text-stroke:0.2px currentColor">Media</span>
<span class="t" style="left:1068.7px;top:100.7px;font-size:14.97px;letter-spacing:0.41px;color:#161616;font-weight:400;-webkit-text-stroke:0.2px currentColor">Link</span>
<span class="t" style="left:1068.7px;top:132.7px;font-size:14.97px;letter-spacing:0.49px;color:#161616;font-weight:400;-webkit-text-stroke:0.2px currentColor">Bookmark</span>
<span class="t" style="left:1069.7px;top:165.7px;font-size:14.97px;letter-spacing:0.59px;color:#161616;font-weight:400;-webkit-text-stroke:0.2px currentColor">Cross-reference</span>
<span class="t" style="left:1220.0px;top:152.7px;font-size:14.97px;letter-spacing:0.38px;color:#161616;font-weight:400;-webkit-text-stroke:0.2px currentColor">Comment</span>
<span class="t" style="left:1321.0px;top:152.7px;font-size:14.97px;letter-spacing:0.58px;color:#161616;font-weight:400;-webkit-text-stroke:0.2px currentColor">Header</span>
<span class="t" style="left:1396.7px;top:152.7px;font-size:14.97px;letter-spacing:0.60px;color:#161616;font-weight:400;-webkit-text-stroke:0.2px currentColor">Footer</span>
<span class="t" style="left:1474.0px;top:152.7px;font-size:14.97px;letter-spacing:0.36px;color:#161616;font-weight:400;-webkit-text-stroke:0.2px currentColor">Page</span>
<span class="t" style="left:1463.5px;top:169.6px;font-size:14.97px;letter-spacing:0.64px;color:#161616;font-weight:400;-webkit-text-stroke:0.2px currentColor">Numbe</span>
<span class="t" style="left:1555.0px;top:152.7px;font-size:14.97px;letter-spacing:0.15px;color:#161616;font-weight:400;-webkit-text-stroke:0.2px currentColor">Text Box</span>
<span class="t" style="left:1627.0px;top:152.7px;font-size:14.97px;letter-spacing:0.42px;color:#161616;font-weight:400;-webkit-text-stroke:0.2px currentColor">WordArt</span>
<span class="t" style="left:1711.0px;top:152.7px;font-size:14.97px;letter-spacing:0.83px;color:#8a8a8a;font-weight:400;-webkit-text-stroke:0.2px currentColor">Drop</span>
<span class="t" style="left:1715.0px;top:169.6px;font-size:14.97px;letter-spacing:-0.07px;color:#8a8a8a;font-weight:400;-webkit-text-stroke:0.2px currentColor">Cap</span>
<span class="t" style="left:1848.0px;top:152.7px;font-size:14.97px;letter-spacing:0.40px;color:#161616;font-weight:400;-webkit-text-stroke:0.2px currentColor">Equation</span>
<span class="t" style="left:1923.0px;top:152.7px;font-size:14.97px;letter-spacing:0.32px;color:#161616;font-weight:400;-webkit-text-stroke:0.2px currentColor">Advanced</span>
<span class="t" style="left:1930.7px;top:169.6px;font-size:14.97px;letter-spacing:0.74px;color:#161616;font-weight:400;-webkit-text-stroke:0.2px currentColor">Symbol</span>
<span class="t" style="left:33.2px;top:1255.5px;font-size:17.01px;letter-spacing:0.06px;color:#555555;font-weight:400;-webkit-text-stroke:0.1px currentColor">Page 1 of 1</span>
<span class="t" style="left:150.4px;top:1255.5px;font-size:17.01px;letter-spacing:0.51px;color:#555555;font-weight:400;-webkit-text-stroke:0.1px currentColor">3 of 109 words</span>
<span class="t" style="left:345.0px;top:1255.5px;font-size:17.01px;letter-spacing:0.52px;color:#555555;font-weight:400;-webkit-text-stroke:0.1px currentColor">English (United States)</span>
<span class="t" style="left:1269.6px;top:1255.7px;font-size:17.01px;letter-spacing:0.57px;color:#555555;font-weight:400;-webkit-text-stroke:0.1px currentColor">Add-ins loaded successfully</span>
<span class="t" style="left:1553.0px;top:1255.7px;font-size:17.01px;letter-spacing:0.73px;color:#555555;font-weight:400;-webkit-text-stroke:0.1px currentColor">Focus</span>
<span class="t" style="left:614.3px;top:466.6px;font-size:41.28px;letter-spacing:0.00px;color:#0d0d0d;font-weight:400;transform:scaleX(0.8958);transform-origin:0 0;-webkit-text-stroke:0.7px currentColor">MICROSOFT</span>
<span class="t" style="left:611.6px;top:513.6px;font-size:41.28px;letter-spacing:0.00px;color:#0d0d0d;font-weight:400;transform:scaleX(0.8332);transform-origin:0 0;-webkit-text-stroke:0.7px currentColor">OFFICE USER</span>
<span class="t" style="left:1118.2px;top:448.8px;font-size:23.98px;letter-spacing:0.00px;color:#0d0d0d;font-weight:400;transform:scaleX(0.8980);transform-origin:0 0;-webkit-text-stroke:0.4px currentColor">RECIPIENT NAME</span>
<span class="t" style="left:1113.4px;top:478.7px;font-size:23.98px;letter-spacing:0.00px;color:#0d0d0d;font-weight:400;transform:scaleX(0.9372);transform-origin:0 0;-webkit-text-stroke:0.4px currentColor">TITLE / COMPANY</span>
<span class="t" style="left:1160.0px;top:508.5px;font-size:23.98px;letter-spacing:0.00px;color:#0d0d0d;font-weight:400;transform:scaleX(0.8565);transform-origin:0 0;-webkit-text-stroke:0.4px currentColor">ADDRESS</span>
<span class="t" style="left:701.2px;top:693.5px;font-size:17.15px;letter-spacing:-0.60px;color:#0d0d0d;font-weight:400;-webkit-text-stroke:0.3px currentColor">EMAIL</span>
<span class="t" style="left:677.3px;top:809.9px;font-size:17.15px;letter-spacing:-0.71px;color:#0d0d0d;font-weight:400;-webkit-text-stroke:0.3px currentColor">TELEPHONE</span>
<span class="t" style="left:634.8px;top:857.6px;font-size:17.15px;letter-spacing:-0.43px;color:#0d0d0d;font-weight:400;-webkit-text-stroke:0.3px currentColor">ADDRESS, CITY, ST ZIP</span>
<span class="t" style="left:938.0px;top:589.7px;font-size:17.44px;letter-spacing:-0.35px;color:#595959;font-weight:400;-webkit-text-stroke:0.15px currentColor">Dear Recipient Name,</span>
<span class="t" style="left:939.0px;top:623.7px;font-size:17.44px;letter-spacing:-0.19px;color:#0d0d0d;font-weight:400;-webkit-text-stroke:0.15px currentColor">To get started, click placeholder text and start typing.</span>
<span class="t" style="left:938.0px;top:657.7px;font-size:17.44px;letter-spacing:-0.10px;color:#0d0d0d;font-weight:400;-webkit-text-stroke:0.15px currentColor">Use your cover letter to show how your talent and experience will solve</span>
<span class="t" style="left:939.0px;top:680.6px;font-size:17.44px;letter-spacing:-0.13px;color:#0d0d0d;font-weight:400;-webkit-text-stroke:0.15px currentColor">a problem or drive results for your future employer. For example, if you</span>
<span class="t" style="left:939.0px;top:703.6px;font-size:17.44px;letter-spacing:-0.38px;color:#0d0d0d;font-weight:400;-webkit-text-stroke:0.15px currentColor">say you’re collaborative, give an example of how you used your</span>
<span class="t" style="left:939.0px;top:726.6px;font-size:17.44px;letter-spacing:-0.22px;color:#0d0d0d;font-weight:400;-webkit-text-stroke:0.15px currentColor">collaboration skills at your last internship, and then show how that</span>
<span class="t" style="left:939.0px;top:748.6px;font-size:17.44px;letter-spacing:-0.21px;color:#0d0d0d;font-weight:400;-webkit-text-stroke:0.15px currentColor">experience will benefit the employer.</span>
<span class="t" style="left:938.0px;top:781.7px;font-size:17.44px;letter-spacing:-0.18px;color:#0d0d0d;font-weight:400;-webkit-text-stroke:0.15px currentColor">It’s all about personalization. Write a cover letter that uniquely presents</span>
<span class="t" style="left:939.0px;top:803.7px;font-size:17.44px;letter-spacing:-0.30px;color:#0d0d0d;font-weight:400;-webkit-text-stroke:0.15px currentColor">the real you and the future impact only you can make at the company.</span>
<span class="t" style="left:939.0px;top:859.6px;font-size:17.44px;letter-spacing:-0.60px;color:#0d0d0d;font-weight:400;-webkit-text-stroke:0.15px currentColor">Sincerely,</span>
<span class="t" style="left:938.0px;top:893.6px;font-size:17.44px;letter-spacing:-0.03px;color:#0d0d0d;font-weight:400;-webkit-text-stroke:0.15px currentColor">Microsoft Office User</span>
<span class="t" style="left:1524.0px;top:168.9px;font-size:15.99px;letter-spacing:0.10px;color:#505050;font-weight:400;-webkit-text-stroke:0.2px currentColor;z-index:6">Add Page Numbers</span>
<svg class="a" style="left:0;top:0;z-index:7" width="2048" height="1280" viewBox="0 0 2048 1280">
<rect x="1445.5" y="81" width="96" height="114.5" rx="15" fill="none" stroke="#e5432a" stroke-width="4.4"/>
<path d="M6.9 207.4 V197 H11.4" fill="none" stroke="#6a6a6a" stroke-width="1.7"/>
<path d="M10.6 193.4 L15.2 197 L10.6 200.6 Z" fill="#6a6a6a"/>
<g fill="#4a4a4a"><rect x="922.9" y="194.9" width="1.3" height="1.3"/><rect x="922.9" y="197.7" width="1.3" height="1.3"/><rect x="922.9" y="200.5" width="1.3" height="1.3"/><rect x="922.9" y="203.4" width="1.3" height="1.3"/><rect x="922.9" y="206.2" width="1.3" height="1.3"/><rect x="925.8" y="194.9" width="1.3" height="1.3"/><rect x="925.8" y="197.7" width="1.3" height="1.3"/><rect x="925.8" y="200.5" width="1.3" height="1.3"/><rect x="925.8" y="203.4" width="1.3" height="1.3"/><rect x="925.8" y="206.2" width="1.3" height="1.3"/><rect x="928.8" y="194.9" width="1.3" height="1.3"/><rect x="928.8" y="197.7" width="1.3" height="1.3"/><rect x="928.8" y="200.5" width="1.3" height="1.3"/><rect x="928.8" y="203.4" width="1.3" height="1.3"/><rect x="928.8" y="206.2" width="1.3" height="1.3"/><rect x="931.6" y="194.9" width="1.3" height="1.3"/><rect x="931.6" y="197.7" width="1.3" height="1.3"/><rect x="931.6" y="200.5" width="1.3" height="1.3"/><rect x="931.6" y="203.4" width="1.3" height="1.3"/><rect x="931.6" y="206.2" width="1.3" height="1.3"/><rect x="1487.0" y="200.5" width="1.3" height="1.3"/><rect x="1487.0" y="203.4" width="1.3" height="1.3"/><rect x="1487.0" y="206.2" width="1.3" height="1.3"/><rect x="1489.9" y="200.5" width="1.3" height="1.3"/><rect x="1489.9" y="203.4" width="1.3" height="1.3"/><rect x="1489.9" y="206.2" width="1.3" height="1.3"/><rect x="1492.8" y="200.5" width="1.3" height="1.3"/><rect x="1492.8" y="203.4" width="1.3" height="1.3"/><rect x="1492.8" y="206.2" width="1.3" height="1.3"/><rect x="1002.7" y="213.4" width="1.3" height="4"/><rect x="1068.1" y="213.4" width="1.3" height="4"/><rect x="1133.5" y="213.4" width="1.3" height="4"/><rect x="1198.9" y="213.4" width="1.3" height="4"/><rect x="1264.3" y="213.4" width="1.3" height="4"/><rect x="1329.7" y="213.4" width="1.3" height="4"/><rect x="1395.1" y="213.4" width="1.3" height="4"/><rect x="1460.5" y="213.4" width="1.3" height="4"/></g>
<path d="M931.2 190.4 H944.6 L937.9 197.6 Z" fill="#fff" stroke="#9a9a9a" stroke-width="1.2" stroke-linejoin="round"/>
<path d="M937.9 201.4 L931.6 207.2 V211 H944.3 V207.3 Z" fill="#fff" stroke="#9a9a9a" stroke-width="1.2" stroke-linejoin="round"/>
<rect x="931.5" y="211.6" width="13" height="8.8" rx="1.6" fill="#fff" stroke="#9a9a9a" stroke-width="1.3"/>
<path d="M1479.6 202.6 L1473.4 208.4 V211.6 H1485.8 V208.4 Z" fill="#fff" stroke="#9a9a9a" stroke-width="1.2" stroke-linejoin="round"/>
<!-- status bar icons -->
<g fill="none" stroke="#666" stroke-width="1.3" stroke-linejoin="round">
 <path d="M297.2 1256.2 V1270.6 Q302 1270.2 307.4 1273.2 V1258.8 Q302 1256 297.2 1256.2 Z"/>
 <path d="M307.4 1258.8 Q309.6 1257.4 311.6 1256.6"/>
 <path d="M310.8 1263 L313.4 1266.4 L318.6 1258.2"/>
</g>
<path d="M1252 1258 L1258.8 1255 L1265.2 1258 V1267.5 L1258.8 1270.6 L1252 1267.5 Z" fill="#666"/>
<path d="M1243.6 1264.6 L1248.6 1262.4 L1253.4 1264.6 V1271 L1248.6 1273.2 L1243.6 1271 Z" fill="#777" stroke="#e1e1e1" stroke-width="0.8"/>
<g fill="none" stroke="#666" stroke-width="1.4">
 <rect x="1524.5" y="1257" width="18" height="13.6" rx="1.5"/>
</g>
<g fill="none" stroke="#666" stroke-width="1.2">
 <path d="M1528 1260.5 V1263 M1528 1260.5 H1530.5 M1539 1260.5 H1536.5 M1539 1260.5 V1263 M1528 1267 V1264.6 M1528 1267 H1530.5 M1539 1267 H1536.5 M1539 1267 V1264.6"/>
</g>
<g fill="#fff" stroke="#555" stroke-width="1.2">
 <rect x="1634.8" y="1255.4" width="17.6" height="16.6"/>
</g>
<g stroke="#555" stroke-width="1.2"><path d="M1637.6 1259 H1649.6 M1637.6 1262 H1649.6 M1637.6 1265 H1649.6 M1637.6 1268 H1649.6"/></g>
<g fill="none" stroke="#555" stroke-width="1.2">
 <path d="M1684.2 1255.6 H1697.6 V1262 M1684.2 1255.6 V1271.4 H1692"/>
 <path d="M1686.4 1259 H1695.4 M1686.4 1262 H1693 M1686.4 1265 H1690.6"/>
</g>
<circle cx="1699.4" cy="1267.6" r="4.6" fill="#555"/>
<g stroke="#555" stroke-width="1.4">
 <path d="M1735.6 1256.5 H1740 M1743.6 1256.5 H1756 M1738.6 1261.4 H1742.4 M1745.4 1261.4 H1756 M1738.6 1266.3 H1742.4 M1745.4 1266.3 H1756 M1735.6 1271.2 H1756"/>
 <path d="M1785.4 1256.6 H1804.8 M1785.4 1261.4 H1804.8 M1785.4 1266.2 H1804.8 M1785.4 1271 H1798"/>
</g>
<path d="M1833.4 1263.6 H1843.4" stroke="#444" stroke-width="2.2"/>
<rect x="1855.6" y="1261.6" width="141.6" height="4" rx="2" fill="#9c9c9c"/>
<circle cx="1929.6" cy="1263.6" r="10.4" fill="#fff" stroke="#cfcfcf" stroke-width="0.8"/>
<path d="M2006 1263.6 H2017.4 M2011.7 1257.9 V1269.3" stroke="#444" stroke-width="2.2"/>
<!-- arrow -->
<path d="M1326.7 271.7 L1418 197" stroke="#e5432a" stroke-width="4.6" stroke-linecap="round"/>
<path d="M1434.5 186 L1410.8 190.6 L1424.8 207.6 Z" fill="#e5432a"/>
</svg>

</body></html>
